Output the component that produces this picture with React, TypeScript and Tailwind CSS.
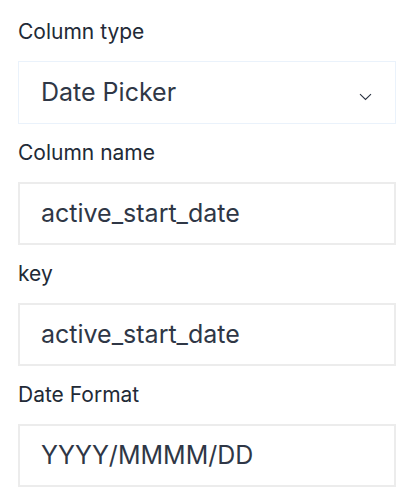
import React from "react";

function Label({ children }: { children: React.ReactNode }) {
  return (
    <div className="h-[28px] text-[21px] leading-[28px] text-[#222a36]">{children}</div>
  );
}

function Field({ label, value }: { label: string; value: string }) {
  return (
    <div className="flex flex-col gap-[15px]">
      <Label>{label}</Label>
      <div className="h-[63px] border-2 border-[#ececec] bg-white flex items-center pl-[21px] text-[25px] text-[#2f3746]">
        {value}
      </div>
    </div>
  );
}

export default function App() {
  return (
    <div
      className="w-[415px] h-[499px] bg-white pt-[18px] pl-[18px] pr-[19px] flex flex-col gap-[15px]"
      style={{ fontFamily: "Inter, 'Noto Sans', sans-serif" }}
    >
      <div className="flex flex-col gap-[15px]">
        <Label>Column type</Label>
        <div className="h-[63px] border border-[#eaf2fb] bg-white flex items-center justify-between pl-[22px] pr-[23px] text-[25px] text-[#2f3746]">
          <span>Date Picker</span>
          <svg className="mt-[8px]" width="13" height="8" viewBox="0 0 13 8" fill="none">
            <path d="M1 1.2 L6.5 6.5 L12 1.2" stroke="#2b3342" strokeWidth="1.1" />
          </svg>
        </div>
      </div>
      <Field label="Column name" value="active_start_date" />
      <Field label="key" value="active_start_date" />
      <Field label="Date Format" value="YYYY/MMMM/DD" />
    </div>
  );
}
